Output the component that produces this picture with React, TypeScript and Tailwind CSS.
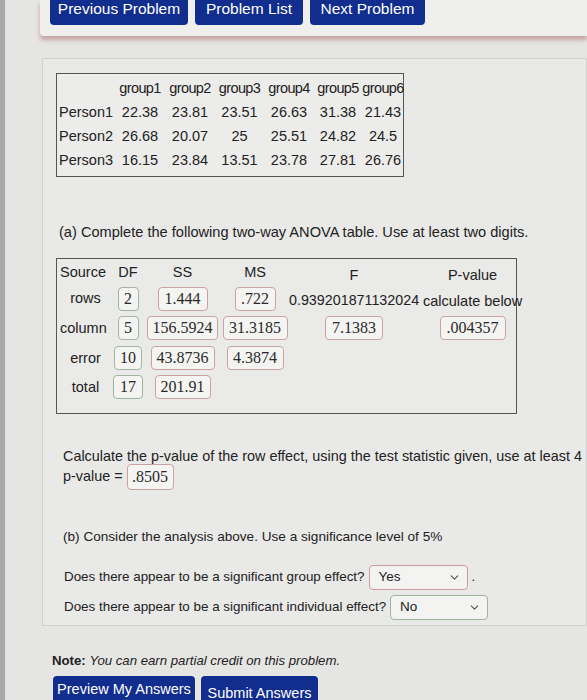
import React from 'react';
import { ChevronDown } from 'lucide-react';

const groups = ['group1', 'group2', 'group3', 'group4', 'group5', 'group6'];
const people = [
  { name: 'Person1', vals: ['22.38', '23.81', '23.51', '26.63', '31.38', '21.43'] },
  { name: 'Person2', vals: ['26.68', '20.07', '25', '25.51', '24.82', '24.5'] },
  { name: 'Person3', vals: ['16.15', '23.84', '13.51', '23.78', '27.81', '26.76'] },
];

const Answer: React.FC<{ value: string; ok?: boolean; className?: string }> = ({ value, ok, className }) => (
  <span
    className={`inline-flex items-center justify-center h-[24px] px-[5px] rounded-[4px] bg-[#f4f4f2] border text-[16px] text-[#2a2a2a] font-['Liberation_Serif',serif] ${ok ? 'border-[#9fb59f]' : 'border-[#c9a2a2]'} ${className ?? ''}`}
  >
    {value}
  </span>
);

const Pick: React.FC<{ value: string; ok?: boolean; width: string }> = ({ value, ok, width }) => (
  <span
    className={`inline-flex items-center justify-between h-[25px] pl-[9px] pr-[6px] rounded-[4px] bg-[#f3f3f1] border text-[13.5px] text-[#222] ${ok ? 'border-[#9db59d]' : 'border-[#cf9c9c]'} ${width}`}
  >
    {value}
    <ChevronDown size={13} strokeWidth={2} className="text-[#555]" />
  </span>
);

const NavButton: React.FC<{ label: string; width: string }> = ({ label, width }) => (
  <button className={`h-[25px] ${width} rounded-b-[4px] bg-[#112d8e] text-white text-[15.5px] leading-none pb-[9px] flex items-end justify-center`}>
    {label}
  </button>
);

const cols = 'grid grid-cols-[53px_32px_77px_68px_130px_107px] items-center text-center whitespace-nowrap';
const dataCols = 'grid grid-cols-[56px_50px_50px_49px_50px_48px_42px] h-[24px] items-center';

export default function App() {
  return (
    <div className="h-[700px] overflow-hidden bg-[#e5e5e3] border-l-[5px] border-[#a9a9a9] font-['Liberation_Sans',Arial,sans-serif] text-[#222]">
      {/* nav bar */}
      <div className="ml-[35px] h-[36px] bg-[#efefed] rounded-bl-[4px] shadow-[0_4px_4px_#c7a4a4] flex gap-[7px] pl-[10px]">
        <NavButton label="Previous Problem" width="w-[138px]" />
        <NavButton label="Problem List" width="w-[108px]" />
        <NavButton label="Next Problem" width="w-[115px]" />
      </div>

      {/* problem */}
      <div className="ml-[37px] mt-[22px] h-[568px] border border-[#d2d2d0] bg-[#e9e9e7] pt-[14px] pl-[13px] overflow-hidden">
        <div className="w-[348px] border border-[#555] bg-[#ececea] pl-[2px] pt-[3px] pb-[3px] text-[14.5px]">
          <div className={dataCols}>
            <span />
            {groups.map((g) => (
              <span key={g} className="text-center tracking-[-0.6px]">{g}</span>
            ))}
          </div>
          {people.map((p) => (
            <div key={p.name} className={dataCols}>
              <span>{p.name}</span>
              {p.vals.map((v, i) => (
                <span key={i} className="text-center">{v}</span>
              ))}
            </div>
          ))}
        </div>

        <p className="mt-[45px] pl-[3px] text-[14.6px]">
          (a) Complete the following two-way ANOVA table. Use at least two digits.
        </p>

        <div className="mt-[14px] w-[461px] h-[156px] border border-[#555] bg-[#eaeae8] pl-[2px] text-[14.5px]">
          <div className={`${cols} h-[26px]`}>
            <span className="text-left pl-[1px]">Source</span>
            <span>DF</span>
            <span>SS</span>
            <span>MS</span>
            <span className="pt-[6px]">F</span>
            <span className="pt-[6px]">P-value</span>
          </div>
          <div className={`${cols} h-[28px]`}>
            <span>rows</span>
            <span><Answer value="2" ok className="w-[21px]" /></span>
            <span><Answer value="1.444" className="w-[50px]" /></span>
            <span><Answer value=".722" className="w-[41px]" /></span>
            <span className="pt-[4px] text-[14.3px]">0.939201871132024</span>
            <span className="text-left pt-[6px] pl-[4px]">calculate below</span>
          </div>
          <div className={`${cols} h-[31px]`}>
            <span className="text-left pl-[1px]">column</span>
            <span><Answer value="5" ok className="w-[21px]" /></span>
            <span><Answer value="156.5924" className="w-[71px]" /></span>
            <span><Answer value="31.3185" className="w-[65px]" /></span>
            <span><Answer value="7.1383" className="w-[58px]" /></span>
            <span><Answer value=".004357" className="w-[66px]" /></span>
          </div>
          <div className={`${cols} h-[29px]`}>
            <span>error</span>
            <span><Answer value="10" ok className="w-[28px]" /></span>
            <span><Answer value="43.8736" className="w-[64px]" /></span>
            <span><Answer value="4.3874" className="w-[57px]" /></span>
            <span />
            <span />
          </div>
          <div className={`${cols} h-[29px]`}>
            <span>total</span>
            <span><Answer value="17" ok className="w-[30px]" /></span>
            <span><Answer value="201.91" className="w-[56px]" /></span>
            <span />
            <span />
            <span />
          </div>
        </div>

        <div className="mt-[32px] pl-[7px] text-[14.4px] whitespace-nowrap">
          <p>Calculate the p-value of the row effect, using the test statistic given, use at least 4 digits.</p>
          <p className="flex items-center gap-[4px] -mt-[4px]">
            p-value = <Answer value=".8505" className="w-[47px] h-[26px]" />
          </p>
        </div>

        <p className="mt-[37px] pl-[7px] text-[13.6px]">
          (b) Consider the analysis above. Use a significance level of 5%
        </p>

        <div className="mt-[18px] pl-[8px] text-[13.4px] flex flex-col gap-[5px] whitespace-nowrap">
          <p className="flex items-center gap-[4px]">
            Does there appear to be a significant group effect? <Pick value="Yes" width="w-[99px]" />.
          </p>
          <p className="flex items-center gap-[4px]">
            Does there appear to be a significant individual effect? <Pick value="No" ok width="w-[98px]" />
          </p>
        </div>
      </div>

      <p className="mt-[25px] ml-[47px] text-[13.2px]">
        <b>Note:</b> <i>You can earn partial credit on this problem.</i>
      </p>

      <div className="mt-[5px] ml-[48px] flex gap-[6px]">
        <button className="h-[30px] w-[142px] rounded-t-[4px] bg-[#112d8e] text-white text-[14.5px] pb-[1px]">
          Preview My Answers
        </button>
        <button className="h-[30px] w-[117px] rounded-t-[4px] bg-[#112d8e] text-white text-[14.5px] pt-[7px]">
          Submit Answers
        </button>
      </div>
    </div>
  );
}
